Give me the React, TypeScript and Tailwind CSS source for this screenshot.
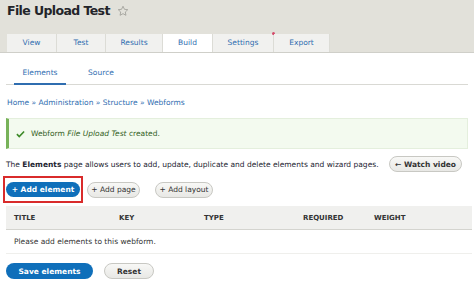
import React from "react";

const tabs = [
  { name: "View", w: "w-[50px]" },
  { name: "Test", w: "w-[49px]" },
  { name: "Results", w: "w-[57px]" },
  { name: "Build", w: "w-[50px]", active: true },
  { name: "Settings", w: "w-[61px]" },
  { name: "Export", w: "w-[56px]" },
];

function Star() {
  return (
    <svg width="12" height="12" viewBox="0 0 24 24" fill="none" stroke="#9a9a94" strokeWidth="1.6" strokeLinejoin="round">
      <path d="M12 2.5l2.9 6.1 6.6.8-4.9 4.6 1.3 6.6L12 17.3l-5.9 3.3 1.3-6.6-4.9-4.6 6.6-.8z" />
    </svg>
  );
}

const grayBtn =
  "rounded-full border border-[#c8c8c3] bg-gradient-to-b from-[#f8f8f6] to-[#e8e8e5] text-[7.5px] text-[#333]";

export default function App() {
  return (
    <div className="w-[474px] h-[287px] overflow-hidden bg-white text-[#222330] font-['DejaVu_Sans',sans-serif]">
      {/* header */}
      <div className="bg-[#e2e1da] px-[7px] pt-[2px] border-b border-[#cfcfc9]">
        <div className="flex items-center gap-[7px] h-[18px]">
          <h1 className="text-[12.5px] font-bold tracking-[-0.6px] text-[#232429]">File Upload Test</h1>
          <Star />
        </div>
        <ul className="flex h-[18px] mt-[14px]">
          {tabs.map((t) => (
            <li
              key={t.name}
              className={
                "relative flex items-center justify-center text-[7.5px] text-[#2f6db0] border-r border-[#dcdcd6] " +
                t.w +
                (t.active ? " bg-white" : " bg-[#f1f1ef]")
              }
            >
              {t.name}
              {t.name === "Settings" && (
                <span className="absolute right-[-2px] top-[-2px] w-[3px] h-[3px] rounded-full bg-[#d44a6a]" />
              )}
            </li>
          ))}
        </ul>
      </div>

      {/* secondary tabs */}
      <div className="mx-[6px] mt-[10px] flex border-b border-[#d9d9d4] h-[22px] text-[7.5px] text-[#2f6db0]">
        <div className="w-[52px] ml-[8px] flex justify-center pt-[4px] border-b-2 border-[#2f6db0] mb-[-1px]">Elements</div>
        <div className="w-[70px] flex justify-center pt-[4px]">Source</div>
      </div>

      {/* breadcrumb */}
      <div className="mx-[7px] mt-[12px] text-[7.5px] text-[#2f6db0]">
        Home » Administration » Structure » Webforms
      </div>

      {/* status */}
      <div className="mx-[6px] mt-[10px] h-[31px] flex items-center bg-[#f3faef] border border-[#e4efdd] border-l-[3px] border-l-[#77b259] text-[7.5px] text-[#325e1c]">
        <svg className="ml-[7px] mr-[6px]" width="9" height="8" viewBox="0 0 10 8" fill="none" stroke="#3d8a28" strokeWidth="1.8">
          <path d="M1 4.2l2.6 2.6L9 1.2" />
        </svg>
        <span>
          Webform <em>File Upload Test</em> created.
        </span>
      </div>

      {/* description */}
      <div className="mx-[6px] mt-[7px] flex items-center justify-between h-[16px]">
        <p className="text-[7.5px] text-[#222330] whitespace-nowrap">
          The <strong>Elements</strong> page allows users to add, update, duplicate and delete elements and wizard pages.
        </p>
        <button className={"mr-[6px] h-[16px] w-[73px] font-bold " + grayBtn}>← Watch video</button>
      </div>

      {/* actions */}
      <div className="mx-[3px] mt-[4px] flex items-center gap-[4px]">
        <div className="flex border-2 border-[#d92b2b] px-[1px] py-[4px]">
          <button className="h-[15px] w-[74px] rounded-full bg-[#0f6fba] text-white text-[7.5px] font-bold">
            + Add element
          </button>
        </div>
        <button className={"h-[16px] w-[53px] " + grayBtn}>+ Add page</button>
        <button className={"ml-[11px] h-[16px] w-[58px] " + grayBtn}>+ Add layout</button>
      </div>

      {/* table */}
      <div className="mx-[6px] mt-[3px] w-[466px]">
        <div className="grid grid-cols-[105px_85px_99px_71px_1fr] h-[24px] items-center bg-[#f0f0ee] border-b border-[#d4d4cf] pl-[8px] text-[7px] font-semibold text-[#333]">
          <span>TITLE</span>
          <span>KEY</span>
          <span>TYPE</span>
          <span>REQUIRED</span>
          <span>WEIGHT</span>
        </div>
        <div className="h-[24px] flex items-center pl-[8px] border-b border-[#efefec] text-[7.5px] text-[#333]">
          Please add elements to this webform.
        </div>
      </div>

      {/* footer buttons */}
      <div className="mx-[6px] mt-[9px] flex items-center gap-[11px]">
        <button className="h-[16px] w-[87px] rounded-full bg-[#0f6fba] text-white text-[7.5px] font-bold">
          Save elements
        </button>
        <button className={"h-[16px] w-[50px] font-bold " + grayBtn}>Reset</button>
      </div>
    </div>
  );
}
